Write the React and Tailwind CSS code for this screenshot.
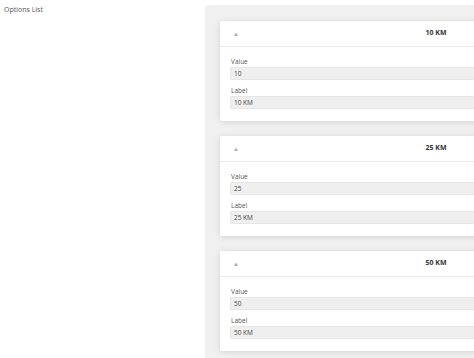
import React from "react";

const items = [
  { value: "10", label: "10 KM" },
  { value: "25", label: "25 KM" },
  { value: "50", label: "50 KM" },
];

function Field({ name, val }) {
  return (
    <div className="flex flex-col">
      <div className="h-[10px] leading-[10px] text-[6.5px] text-[#555] pl-[1px]">{name}</div>
      <div className="h-[13px] bg-[#efefef] border border-[#e6e6e6] rounded-[1px] flex items-center pl-[3px] text-[6.5px] text-[#444]">
        {val}
      </div>
    </div>
  );
}

function Card({ value, label }) {
  return (
    <div className="w-[432px] shrink-0 bg-white rounded-[2px] shadow-[0_1px_6px_rgba(0,0,0,0.12)]">
      <div className="h-[26px] grid grid-cols-[1fr_auto_1fr] items-center border-b border-[#ececec]">
        <div className="pl-[13px] text-[6px] text-[#aaa] leading-none">▲</div>
        <div className="text-[7px] font-bold text-[#333]">{label}</div>
        <div />
      </div>
      <div className="px-[10px] pt-[10px] pb-[12px] flex flex-col gap-[6px]">
        <Field name="Value" val={value} />
        <Field name="Label" val={label} />
      </div>
    </div>
  );
}

export default function App() {
  return (
    <div
      className="w-[474px] h-[358px] bg-white flex overflow-hidden"
      style={{ fontFamily: '"Open Sans", "Noto Sans", sans-serif' }}
    >
      <div className="w-[205px] shrink-0 pl-[4px] pt-[5px] text-[7px] text-[#555]">Options List</div>
      <div className="flex-1 mt-[5px] bg-[#f0f0f0] rounded-tl-[4px] pl-[15px] pt-[16px] flex flex-col gap-[15px] min-w-0">
        {items.map((it) => (
          <Card key={it.value} {...it} />
        ))}
      </div>
    </div>
  );
}
